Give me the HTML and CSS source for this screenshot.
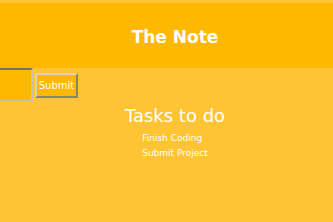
FILE: index.html
```html
<!DOCTYPE html>
<html lang="en">
<head>
  <meta charset="UTF-8" />
  <title>The Note</title>
  <link rel="stylesheet" href="styles.css">
</head>
<body>
  <!-- Header -->
  <div class="header">
    <h1 class="title">The Note</h1>
  </div>

  <!-- Add task -->
  <div class="add-row">
    <input type="text" id="taskInput" />
    <button class="submit-btn">Submit</button>
  </div>

  <!-- Task list -->
  <div class="tasks">
    <h2 class="tasks-title">Tasks to do</h2>
    <ul class="task-list">
      <li>Finish Coding</li>
      <li>Submit Project</li>
    </ul>
  </div>
</body>
</html>
```

FILE: styles.css
```css
body {
  font-family: "Comic Sans MS", "DejaVu Sans", sans-serif;
  margin: 0;
  padding-top: 3px;
  background-color: #ffc433;
  color: white;
  overflow: hidden;
}

.header {
  height: 65px;
  background-color: #ffb800;
  display: flex;
  align-items: center;
  justify-content: center;
  padding-left: 17px;
  padding-top: 2px;
  box-sizing: border-box;
}

.title {
  margin: 0;
  font-size: 17px;
  font-weight: bold;
}

.add-row {
  display: flex;
  align-items: center;
  gap: 2px;
}

#taskInput {
  margin-left: -10px;
  width: 43px;
  height: 34px;
  box-sizing: border-box;
  background-color: #ffb800;
  border: 2px inset #c9c2b0;
}

.submit-btn {
  width: 43px;
  height: 25px;
  padding: 0;
  box-sizing: border-box;
  background-color: #ffb800;
  color: white;
  font-family: inherit;
  font-size: 10px;
  border: 2px outset #ddd3b8;
}

.tasks {
  padding-left: 17px;
  text-align: center;
}

.tasks-title {
  margin: 3px 0 0 0;
  font-size: 18px;
  font-weight: normal;
}

.task-list {
  list-style: none;
  display: inline-block;
  text-align: left;
  margin: 5px 0 0 0;
  padding: 0;
  font-size: 9px;
}

.task-list li {
  line-height: 15px;
}
```
